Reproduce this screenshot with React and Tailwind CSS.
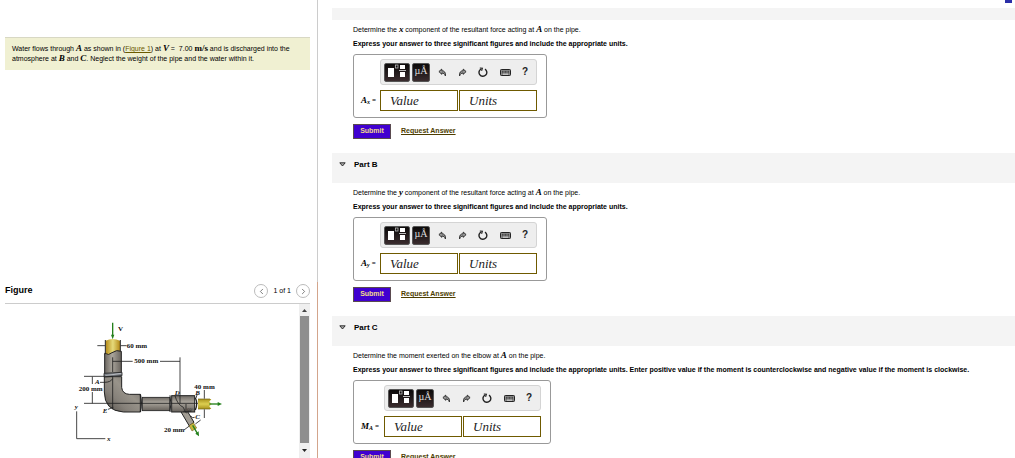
import React, { useState } from "react";
import { ChevronLeft, ChevronRight } from "lucide-react";

const INSTRUCTION =
  "Express your answer to three significant figures and include the appropriate units.";

const parts = [
  {
    id: "a",
    title: null,
    before: "Determine the ",
    variable: "x",
    middle: " component of the resultant force acting at ",
    instruction: INSTRUCTION,
    symbol: "A",
    sub: "x",
    labelWidth: "w-[19px]",
  },
  {
    id: "b",
    title: "Part B",
    before: "Determine the ",
    variable: "y",
    middle: " component of the resultant force acting at ",
    instruction: INSTRUCTION,
    symbol: "A",
    sub: "y",
    labelWidth: "w-[19px]",
  },
  {
    id: "c",
    title: "Part C",
    before: "Determine the moment exerted on the elbow at ",
    variable: null,
    middle: "",
    instruction:
      INSTRUCTION +
      " Enter positive value if the moment is counterclockwise and negative value if the moment is clockwise.",
    symbol: "M",
    sub: "A",
    labelWidth: "w-[23px]",
  },
];

const MathText = ({ children }) => (
  <i className="font-['Liberation_Serif',serif] text-[9px] leading-[0] font-bold">{children}</i>
);

const UndoIcon = ({ flip }) => (
  <svg viewBox="0 0 10 10" className={flip ? "w-[9px] h-[9px] -scale-x-100" : "w-[9px] h-[9px]"}>
    <path
      d="M1 4 L4.2 1.2 V3 C7 3 8.8 5 8.2 8.8 C7.6 6.6 6.4 5.6 4.2 5.6 V7 Z"
      fill="#999"
      stroke="#222"
      strokeWidth="1"
      strokeLinejoin="round"
    />
  </svg>
);

const ResetIcon = () => (
  <svg viewBox="0 0 10 10" className="w-[10px] h-[10px]" fill="none" stroke="#222" strokeWidth="1.4">
    <path d="M3.4 1.8 A3.9 3.9 0 1 0 7 2.1" />
    <path d="M1.8 1 L4.4 1.3 L3.6 3.8" strokeWidth="1.1" />
  </svg>
);

const KeyboardIcon = () => (
  <svg viewBox="0 0 11 7" className="w-[11px] h-[7px]">
    <rect x="0.5" y="0.5" width="10" height="6" rx="0.8" fill="#888" stroke="#222" />
    <path d="M2 2.4 H9 M2 3.8 H9" stroke="#333" strokeWidth="0.8" strokeDasharray="1 0.5" />
    <path d="M3 5.2 H8" stroke="#eee" strokeWidth="0.8" />
  </svg>
);

const TemplateIcon = () => (
  <svg viewBox="0 0 24 17" className="w-[24px] h-[17px]">
    <rect x="3" y="4" width="6" height="9" fill="#fff" />
    <rect x="10.5" y="1" width="2.5" height="3" fill="none" stroke="#bbb" strokeWidth="0.8" />
    <rect x="15" y="1" width="5" height="4" fill="#fff" />
    <path d="M14 6.5 H21" stroke="#bbb" strokeWidth="1" />
    <rect x="15" y="8" width="5" height="5" fill="#fff" />
  </svg>
);

const Toolbar = () => (
  <div className="flex items-center h-[26px] pl-[3px] pr-2 rounded-[3px] border border-[#d4d4d4] bg-[#eeeeee]">
    <button
      aria-label="Templates"
      className="w-[26px] h-[19px] rounded-xs border border-[#555] bg-linear-to-b from-[#0c0a0a] to-[#3a2c2e] flex items-center justify-center"
    >
      <TemplateIcon />
    </button>
    <button className="ml-0.5 w-[18px] h-[19px] rounded-xs border border-[#555] bg-linear-to-b from-[#0c0a0a] to-[#3a2c2e] flex justify-center font-['Liberation_Serif',serif] text-[10px] leading-[13px] text-[#ddd]">
      µÅ
    </button>
    <div className="flex-1 flex items-center justify-between pl-2">
      <button aria-label="Undo">
        <UndoIcon />
      </button>
      <button aria-label="Redo">
        <UndoIcon flip />
      </button>
      <button aria-label="Reset">
        <ResetIcon />
      </button>
      <button aria-label="Keyboard shortcuts">
        <KeyboardIcon />
      </button>
      <button className="text-[10px] leading-none font-bold text-[#222]">?</button>
    </div>
  </div>
);

const inputClass =
  "w-[78px] h-[21px] pl-[9px] border border-[#6f5a00] bg-white font-['Liberation_Serif',serif] italic text-[13px] text-[#222] placeholder:text-[#222] placeholder:opacity-100 outline-none";

const AnswerBox = ({ part }) => (
  <div className="mt-[3px] w-fit h-16 flex items-end pl-[7px] pr-[9px] pb-[6px] rounded-[3px] border border-[#999]">
    <label
      htmlFor={`value-${part.id}`}
      className={`${part.labelWidth} h-[21px] flex items-center whitespace-nowrap font-['Liberation_Serif',serif] text-[9px] leading-none font-bold`}
    >
      <i>{part.symbol}</i>
      <sub className="text-[6px] italic">{part.sub}</sub>
      <span className="ml-0.5 text-[7px]">=</span>
    </label>
    <div className="flex flex-col gap-[5px]">
      <Toolbar />
      <div className="flex gap-px">
        <input id={`value-${part.id}`} placeholder="Value" className={inputClass} />
        <input aria-label="Units" placeholder="Units" className={inputClass} />
      </div>
    </div>
  </div>
);

const Part = ({ part }) => {
  const [open, setOpen] = useState(true);

  return (
    <section>
      {part.title ? (
        <h2 className="h-[30px] bg-[#f4f4f4]">
          <button
            onClick={() => setOpen(!open)}
            className="flex items-center h-[23px] pl-[7px] text-[8px] font-bold"
          >
            <svg viewBox="0 0 7 5" className="w-[7px] h-[5px] mr-2">
              <path d="M0.8 0.8 H6.2 L3.5 4 Z" fill="#aaa" stroke="#222" strokeWidth="0.9" />
            </svg>
            {part.title}
          </button>
        </h2>
      ) : (
        <div className="h-3 bg-[#f4f4f4]" />
      )}
      {open && (
        <div className="pt-[3px] pb-[14px] pl-[21px]">
          <p className="h-[14px] leading-[14px] whitespace-nowrap">
            {part.before}
            {part.variable && <MathText>{part.variable}</MathText>}
            {part.middle}
            <MathText>A</MathText> on the pipe.
          </p>
          <p className="h-[14px] leading-[14px] font-bold whitespace-nowrap">{part.instruction}</p>
          <AnswerBox part={part} />
          <div className="flex items-center mt-[6px]">
            <button className="w-[38px] h-[15px] border border-[#5a4a50] bg-[#4000d0] text-[7px] font-bold text-[#f3dc88]">
              Submit
            </button>
            <a href="#request" className="ml-[10px] font-bold text-[#4d3d00] underline">
              Request Answer
            </a>
          </div>
        </div>
      )}
    </section>
  );
};

const PipeFigure = () => (
  <svg
    viewBox="0 0 480 420"
    className="w-[160px] h-[140px] font-['Liberation_Serif',serif]"
    role="img"
    aria-label="Pipe with elbow E and outlets B and C"
  >
    <defs>
      <linearGradient id="vert" x1="0" x2="1" y1="0" y2="0">
        <stop offset="0" stopColor="#6a655f" />
        <stop offset="0.45" stopColor="#aaa59c" />
        <stop offset="1" stopColor="#69645e" />
      </linearGradient>
      <linearGradient id="horiz" x1="0" x2="0" y1="0" y2="1">
        <stop offset="0" stopColor="#6f6a64" />
        <stop offset="0.4" stopColor="#aaa59c" />
        <stop offset="1" stopColor="#66615b" />
      </linearGradient>
      <linearGradient id="elbow" x1="0" x2="1" y1="1" y2="0">
        <stop offset="0" stopColor="#55504a" />
        <stop offset="0.35" stopColor="#86817a" />
        <stop offset="0.6" stopColor="#98938a" />
        <stop offset="1" stopColor="#6a655f" />
      </linearGradient>
      <linearGradient id="water" x1="0" x2="1" y1="0" y2="0">
        <stop offset="0" stopColor="#b58a18" />
        <stop offset="0.5" stopColor="#e6da7a" />
        <stop offset="1" stopColor="#b58a18" />
      </linearGradient>
      <linearGradient id="jet" x1="0" x2="0" y1="0" y2="1">
        <stop offset="0" stopColor="#a8921c" />
        <stop offset="0.5" stopColor="#ddce50" />
        <stop offset="1" stopColor="#a8921c" />
      </linearGradient>
    </defs>

    {/* Inlet */}
    <path d="M107 92 Q128 82 150 92 V124 Q128 124 120 136 L107 132 Z" fill="url(#water)" />
    <path d="M106 90 V135 M151 90 V125" stroke="#222" strokeWidth="3" />
    <path d="M104 130 Q116 138 126 128 Q140 118 154 124 V196 H104 Z" fill="url(#vert)" stroke="#222" strokeWidth="3" />

    {/* Elbow */}
    <path
      d="M103 200 H155 V232 Q157 252 178 253 H211 V306 H160 Q103 302 103 246 Z"
      fill="url(#elbow)"
      stroke="#222"
      strokeWidth="3"
    />
    <path d="M102 190 L156 187 V197 L102 201 Z" fill="#7d8187" stroke="#222" strokeWidth="2.5" />
    <path d="M106 197 L154 190" stroke="#d5d8dc" strokeWidth="2" />

    {/* Horizontal run */}
    <rect x="217" y="262" width="82" height="40" fill="url(#horiz)" stroke="#222" strokeWidth="2.5" />
    <path d="M211 253 Q217 280 211 306" fill="none" stroke="#222" strokeWidth="4" />
    <path d="M332 304 L358 348 L372 337 L350 300 Z" fill="#a19c93" stroke="#222" strokeWidth="3" />
    <rect x="305" y="257" width="69" height="49" fill="url(#horiz)" stroke="#222" strokeWidth="3" />
    <path d="M300 256 Q305 280 300 306" fill="none" stroke="#222" strokeWidth="3" />

    {/* Outlets */}
    <path d="M376 263 Q384 280 376 300" fill="none" stroke="#222" strokeWidth="4" />
    <path d="M384 267 H424 L418 275 L425 282 L418 289 L424 297 H384 Z" fill="url(#jet)" />
    <path d="M384 267 H420 M384 297 H420" stroke="#6b5a10" strokeWidth="2" />
    <path d="M357 347 L366 363 L380 354 L370 338 Z" fill="#c8b53c" stroke="#5a4a10" strokeWidth="1.5" />
    <path
      d="M315 257 Q322 284 340 292 Q344 304 350 310 M348 282 V302 M340 304 H364"
      fill="none"
      stroke="#222"
      strokeWidth="2.5"
    />

    {/* Flow arrows */}
    <g stroke="#24801c" fill="#24801c" strokeWidth="4">
      <path d="M128 38 V78" />
      <path d="M123 74 H133 L128 88 Z" stroke="none" />
      <path d="M418 282 H446" />
      <path d="M443 276 V288 L456 282 Z" stroke="none" />
      <path d="M368 346 L382 370" />
      <path d="M376 371 L386 364 L387 379 Z" stroke="none" />
    </g>

    {/* Dimension lines */}
    <g stroke="#222" strokeWidth="2.5" fill="none">
      <path d="M82 107 H105 M152 107 H170" />
      <path d="M128 154 H188 M270 154 H330 M128 142 V186 M330 142 V280" />
      <path d="M42 199 H128 M42 280 H384 M128 199 V298" />
      <path d="M67 200 V222 M67 246 V280" />
      <path d="M90 217 H103 Q122 217 128 206 M114 298 L130 292" />
      <path d="M403 240 V266 M403 298 V324 M382 252 L378 264" />
      <path d="M362 318 Q368 326 374 322 M342 360 L358 348 M376 342 L392 330" />
      <path d="M20 304 V386 H106" />
    </g>

    <g fontSize="21" fontWeight="bold" fill="#111">
      <text x="144" y="64">V</text>
      <text x="170" y="114">60 mm</text>
      <text x="193" y="160">500 mm</text>
      <text x="26" y="242">200 mm</text>
      <text x="373" y="238">40 mm</text>
      <text x="282" y="367">20 mm</text>
      <g fontStyle="italic">
        <text x="75" y="223">A</text>
        <text x="98" y="309">E</text>
        <text x="314" y="254">D</text>
        <text x="376" y="255">B</text>
        <text x="376" y="328">C</text>
        <text x="14" y="296">y</text>
        <text x="111" y="393">x</text>
      </g>
    </g>
    <text x="351" y="302" fontSize="14" fill="#222">60°</text>
  </svg>
);

const navButton =
  "w-[14px] h-[14px] rounded-full border border-[#bbb] text-[#555] flex items-center justify-center";

export default function App() {
  return (
    <div className="flex h-screen overflow-hidden bg-white text-black font-['Liberation_Sans',Arial,sans-serif] text-[7px]">
      <aside className="w-[318px] shrink-0 flex flex-col">
        <div className="h-[282px] shrink-0 border-r border-[#ccc] pl-[5px] pr-[7px] pt-[37px]">
          <p className="border-t border-[#d8d8c4] bg-[#f0f0d2] pl-[7px] pr-2 pt-[6px] pb-[6px] leading-[10px] whitespace-nowrap">
            Water flows through <MathText>A</MathText> as shown in (
            <a href="#figure" className="text-[#6b5a00] underline">
              Figure 1
            </a>
            ) at <MathText>V</MathText> = &nbsp;7.00{" "}
            <span className="font-['Liberation_Serif',serif] text-[9px] leading-[0] font-bold">m/s</span> and is
            discharged into the
            <br />
            atmosphere at <MathText>B</MathText> and <MathText>C</MathText>. Neglect the weight of the pipe and the
            water within it.
          </p>
        </div>

        <div id="figure" className="flex-1 min-h-0 flex flex-col border-r border-[#d3a58c] pl-[5px] pr-[7px]">
          <div className="flex items-center justify-between h-[22px] pb-[3px] border-b border-[#ccc]">
            <h2 className="text-[9px] font-bold">Figure</h2>
            <div className="flex items-center gap-[5px]">
              <button aria-label="Previous figure" className={navButton}>
                <ChevronLeft className="w-[9px] h-[9px]" />
              </button>
              <span>1 of 1</span>
              <button aria-label="Next figure" className={navButton}>
                <ChevronRight className="w-[9px] h-[9px]" />
              </button>
            </div>
          </div>
          <div className="flex-1 min-h-0 flex justify-between">
            <div className="pt-[6px] pl-[65px]">
              <PipeFigure />
            </div>
            <div className="w-[11px] flex flex-col bg-[#efefef]">
              <button aria-label="Scroll up" className="h-3 flex items-center justify-center">
                <svg viewBox="0 0 5 3" className="w-[5px] h-[3px]">
                  <path d="M0 3 L2.5 0 L5 3 Z" fill="#444" />
                </svg>
              </button>
              <div className="flex-1 mx-px bg-[#8e8e8e]" />
              <button aria-label="Scroll down" className="h-[15px] flex items-center justify-center">
                <svg viewBox="0 0 5 3" className="w-[5px] h-[3px]">
                  <path d="M0 0 L2.5 3 L5 0 Z" fill="#222" />
                </svg>
              </button>
            </div>
          </div>
        </div>
      </aside>

      <main className="flex-1 min-w-0 pl-[14px] overflow-hidden">
        <div className="h-2 flex justify-end pr-[3px]">
          <div className="w-[7px] h-[3px] bg-[#2b2fa8]" />
        </div>
        {parts.map((part) => (
          <Part key={part.id} part={part} />
        ))}
      </main>
    </div>
  );
}
